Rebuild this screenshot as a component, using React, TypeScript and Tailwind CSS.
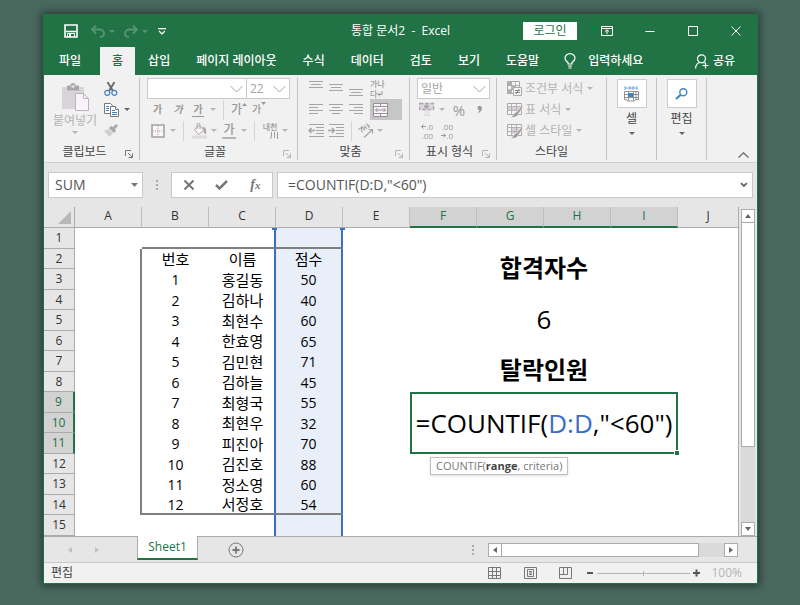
import type { ReactNode } from 'react'

const menuTabs = ['삽입', '페이지 레이아웃', '수식', '데이터', '검토', '보기', '도움말']

const students = [
  { name: '홍길동', score: 50 },
  { name: '김하나', score: 40 },
  { name: '최현수', score: 60 },
  { name: '한효영', score: 65 },
  { name: '김민현', score: 71 },
  { name: '김하늘', score: 45 },
  { name: '최형국', score: 55 },
  { name: '최현우', score: 32 },
  { name: '피진아', score: 70 },
  { name: '김진호', score: 88 },
  { name: '정소영', score: 60 },
  { name: '서정호', score: 54 },
]

const columns = ['A', 'B', 'C', 'D', 'E', 'F', 'G', 'H', 'I', 'J']
const rows = Array.from({ length: 15 }, (_, i) => i + 1)

function Caret({ className = 'text-[#b5b5b5]' }: { className?: string }) {
  return (
    <span className={`flex w-[10px] shrink-0 justify-center ${className}`}>
      <svg width="6" height="3" viewBox="0 0 6 3" fill="currentColor" aria-hidden="true">
        <path d="M0 0h6L3 3z" />
      </svg>
    </span>
  )
}

function Divider() {
  return <span className="mx-[5px] h-5 w-px shrink-0 bg-[#d4d4d4]" />
}

function Tool({
  label,
  className = 'w-5',
  children,
}: {
  label: string
  className?: string
  children: ReactNode
}) {
  return (
    <button
      type="button"
      aria-label={label}
      className={`flex h-[21px] shrink-0 items-center justify-center ${className}`}
    >
      {children}
    </button>
  )
}

function Group({
  label,
  launcher,
  className,
  children,
}: {
  label: string
  launcher?: string
  className: string
  children: ReactNode
}) {
  return (
    <section aria-label={label} className={`flex shrink-0 flex-col border-r border-[#c3c3c3] ${className}`}>
      <div className="h-[66px]">{children}</div>
      <div className="flex h-4 items-center">
        <span className="flex-1 text-center">{label}</span>
        {launcher && (
          <button type="button" aria-label={`${label} 설정`} className={`w-[14px] pt-1 ${launcher}`}>
            <svg width="8" height="8" viewBox="0 0 8 8" fill="none" stroke="currentColor" aria-hidden="true">
              <path d="M.5 6V.5H6M3 3l4 4M7.5 3.5v4h-4" />
            </svg>
          </button>
        )}
      </div>
    </section>
  )
}

function Combo({ value, label, className }: { value: string; label: string; className: string }) {
  return (
    <button
      type="button"
      aria-label={label}
      className={`flex h-[21px] items-center justify-between border border-[#c9c9c9] bg-white pr-[3px] pl-[3px] text-[#a5a5a5] ${className}`}
    >
      <span>{value}</span>
      <svg width="13" height="8" viewBox="0 0 13 8" fill="none" stroke="#a5a5a5" aria-hidden="true">
        <path d="M.5 1l6 6 6-6" />
      </svg>
    </button>
  )
}

function Lines({ lines }: { lines: [number, number, number][] }) {
  return (
    <svg width="14" height="15" viewBox="0 0 14 15" stroke="#a5a5a5" aria-hidden="true">
      {lines.map(([x1, x2, y]) => (
        <path key={y} d={`M${x1} ${y}H${x2}`} />
      ))}
    </svg>
  )
}

function Indent({ flip }: { flip?: boolean }) {
  return (
    <svg width="16" height="13" viewBox="0 0 16 13" fill="none" stroke="#a5a5a5" aria-hidden="true">
      <path d="M1 .5h15M8 3.5h8M8 6.5h8M8 9.5h8M1 12.5h15" />
      <path strokeWidth="1.5" d={flip ? 'M0 6.5h6M4 4l2.500 2.500L4 9' : 'M7 6.500H1M3.500 4L1 6.500 3.500 9'} />
    </svg>
  )
}

function DecimalArrow({ flip }: { flip?: boolean }) {
  return (
    <svg width="5" height="5" viewBox="0 0 5 5" fill="none" stroke="currentColor" aria-hidden="true">
      <path d={flip ? 'M0 2.500h4.500M2.500.5l2 2-2 2' : 'M5 2.500H.5M2.500.5l-2 2 2 2'} />
    </svg>
  )
}

function StyleIcon({ kind }: { kind: 'condition' | 'table' | 'cell' }) {
  return (
    <svg width="16" height="16" viewBox="0 0 16 16" fill="none" stroke="#a9a9a9" aria-hidden="true">
      {kind === 'condition' ? (
        <>
          <path d="M.5.5h12v12H.500z" fill="#f7f3f7" />
          <path d="M1 1h4v4H1zM5 5h4v4H5zM1 9h4v3H1z" fill="#b5afb5" stroke="none" />
          <path d="M.5 4.500h12M.5 8.500h6M4.500.5v12M8.500.5v6" strokeWidth=".8" />
          <path d="M6.500 6.500h8v8h-8z" fill="#f5f5f5" />
          <path d="M8 9.500h5M8 11.500h5M12 8l-3 5" stroke="#858585" />
        </>
      ) : (
        <>
          <path d="M.5 1.500h14v11H.500z" fill="#f7f3f7" />
          <path d={kind === 'cell' ? 'M4 4h8v7H4z' : 'M1 5h13v3H1z'} fill="#d8d0d8" stroke="none" />
          <path d="M.5 4.500h14M.5 8.500h10M4.500 1.500v11M9.500 1.500v7" strokeWidth=".8" />
          <path d="M15.500 3L9.500 10l-2 1c-1 1-1 3-4 4 4 .6 7 0 7.500-2.500L15.500 6z" fill="#9f9b9f" stroke="#f1f1f1" strokeWidth=".6" />
        </>
      )}
    </svg>
  )
}

function TitleBar() {
  return (
    <header className="grid h-8 grid-cols-[1fr_auto_1fr] items-center">
      <div className="flex items-center pl-5 text-white">
        <button type="button" aria-label="저장">
          <svg width="14" height="14" viewBox="0 0 14 14" fill="none" stroke="currentColor" strokeWidth="1.600" aria-hidden="true">
            <path d="M1 1h12v12H1zM2 7.500h10" />
            <path d="M3.500 13V9.500h7V13" strokeWidth="1" />
            <path d="M5 10h2v3H5z" fill="currentColor" stroke="none" />
          </svg>
        </button>
        <button type="button" aria-label="실행 취소" className="ml-[13px] text-[#579573]">
          <svg width="14" height="13" viewBox="0 0 14 13" fill="none" stroke="currentColor" strokeWidth="1.800" aria-hidden="true">
            <path d="M5 .5L1 4.500l4 4M1.500 4.500H8c3 0 5 1.800 5 4s-1.500 3.500-4 3.500" />
          </svg>
        </button>
        <Caret className="ml-[2px] text-[#579573]" />
        <button type="button" aria-label="다시 실행" className="ml-[7px] text-[#579573]">
          <svg width="14" height="13" viewBox="0 0 14 13" fill="none" stroke="currentColor" strokeWidth="1.800" aria-hidden="true">
            <path d="M9 .5l4 4-4 4M12.500 4.500H6c-3 0-5 1.800-5 4S2.500 12 5 12" />
          </svg>
        </button>
        <Caret className="ml-[2px] text-[#579573]" />
        <button type="button" aria-label="빠른 실행 도구 모음" className="ml-2">
          <svg width="8" height="7" viewBox="0 0 8 7" fill="none" stroke="currentColor" strokeWidth="1.200" aria-hidden="true">
            <path d="M0 .6h8M1 3l3 3 3-3" />
          </svg>
        </button>
      </div>
      <h1 className="whitespace-pre text-white">통합 문서2  -  Excel</h1>
      <div className="flex items-center justify-end text-white">
        <button type="button" className="mr-2 h-[18px] w-[54px] bg-white leading-[18px] text-[#217346]">
          로그인
        </button>
        <button type="button" aria-label="리본 메뉴 표시 옵션" className="flex w-[43px] justify-center">
          <svg width="12" height="10" viewBox="0 0 12 10" fill="none" stroke="currentColor" aria-hidden="true">
            <path d="M.5.5h11v9H.5zM.5 2.500h11M6 8V4M4 5.500L6 3.800l2 1.700" />
          </svg>
        </button>
        <button type="button" aria-label="최소화" className="flex w-[43px] justify-center">
          <svg width="10" height="10" viewBox="0 0 10 10" stroke="currentColor" aria-hidden="true">
            <path d="M.5 5.500h9" />
          </svg>
        </button>
        <button type="button" aria-label="최대화" className="flex w-[43px] justify-center">
          <svg width="10" height="10" viewBox="0 0 10 10" fill="none" stroke="currentColor" aria-hidden="true">
            <path d="M.5.5h9v9h-9z" />
          </svg>
        </button>
        <button type="button" aria-label="닫기" className="flex w-[43px] justify-center">
          <svg width="10" height="10" viewBox="0 0 10 10" stroke="currentColor" aria-hidden="true">
            <path d="M.5.5l9 9M9.500.5l-9 9" />
          </svg>
        </button>
      </div>
    </header>
  )
}

function MenuTabs() {
  return (
    <nav className="flex h-7 items-stretch font-medium text-white">
      <button type="button" className="px-[15px]">파일</button>
      <button type="button" className="ml-1 w-[35px] bg-[#f1f1f1] text-[#217346]">홈</button>
      {menuTabs.map((tab) => (
        <button key={tab} type="button" className="px-[13px] last-of-type:px-3">{tab}</button>
      ))}
      <button type="button" className="ml-3 flex items-center gap-3">
        <svg width="12" height="16" viewBox="0 0 12 16" fill="none" stroke="currentColor" strokeWidth="1.200" aria-hidden="true">
          <path d="M4 11V9.500C2.500 8.500 1 7.300 1 5.300a5 4.700 0 0 1 10 0c0 2-1.500 3.200-3 4.200V11zM4 13h4M4.500 15h3" />
        </svg>
        입력하세요
      </button>
      <button type="button" className="mr-[22px] ml-auto flex items-center gap-1">
        <svg width="14" height="15" viewBox="0 0 14 15" fill="none" stroke="currentColor" strokeWidth="1.200" aria-hidden="true">
          <circle cx="6.500" cy="4.800" r="4" />
          <path d="M.6 14.500C.6 11.500 2 9.500 4.500 8.500M8.500 8.500l1 .7M10.500 8.500v6M7.500 11.500h6" />
        </svg>
        공유
      </button>
    </nav>
  )
}

function Ribbon() {
  return (
    <div className="flex border-b border-[#d0d0d0] bg-[#f1f1f1] pt-[3px] pb-[2px] text-[#444]">
      <Group label="클립보드" launcher="text-[#777]" className="w-24">
        <div className="flex pl-2">
          <button type="button" className="flex w-[46px] flex-col items-center pt-[5px] text-[#b5b0b5]">
            <svg width="28" height="28" viewBox="0 0 28 28" fill="none" aria-hidden="true">
              <path d="M1 4h22v22H1z" fill="#d9d4d9" />
              <path d="M6 2.500h3.500a2.500 2.500 0 0 1 5 0H18v5H6z" fill="#aaa6aa" />
              <path d="M10.500 2.500h3v2h-3z" fill="#f1f1f1" />
              <path d="M14.500 10.500h8l5 5v12h-13zM22.500 10.500v5h5" fill="#f9f4f9" stroke="#bcb4bc" />
            </svg>
            <span className="leading-5">붙여넣기</span>
            <Caret />
          </button>
          <div className="ml-1 flex flex-col">
            <Tool label="잘라내기" className="w-[18px]">
              <svg width="14" height="14" viewBox="0 0 14 14" fill="none" aria-hidden="true">
                <path d="M3.500 0l5.500 9M10.500 0L5 9" stroke="#666" strokeWidth="1.800" />
                <circle cx="3.300" cy="10.800" r="2.500" stroke="#3f83c4" strokeWidth="1.200" />
                <circle cx="10.300" cy="10.800" r="2.500" stroke="#3f83c4" strokeWidth="1.200" />
              </svg>
            </Tool>
            <div className="flex items-center">
              <Tool label="복사" className="w-[18px]">
                <svg width="15" height="14" viewBox="0 0 15 14" fill="#fff" stroke="#777" aria-hidden="true">
                  <path d="M.5.5h6l2 2v8h-8z" />
                  <path d="M6.500 3.500h5l3 3v7h-8z" />
                  <path d="M11.500 3.500v3h3" />
                  <path d="M2 3.500h3M2 5.500h3M2 7.500h3M8 7.500h3M8 9.500h5M8 11.500h5" stroke="#3f83c4" />
                </svg>
              </Tool>
              <Caret className="ml-[2px] text-[#666]" />
            </div>
            <Tool label="서식 복사" className="w-[18px]">
              <svg width="14" height="13" viewBox="0 0 14 13" aria-hidden="true">
                <path d="M12 0l2 2-3 3 1 2-2 2-5-5 2-2 2 1z" fill="#aaa6aa" />
                <path d="M5 5l4 4-3.500 4L0 7z" fill="#d3ced3" />
              </svg>
            </Tool>
          </div>
        </div>
      </Group>

      <Group label="글꼴" launcher="text-[#b5b5b5]" className="w-[158px] pl-[7px]">
        <div className="flex">
          <Combo label="글꼴 이름" value="" className="w-[100px]" />
          <Combo label="글꼴 크기" value="22" className="-ml-px w-11" />
        </div>
        <div className="flex items-center text-[10px] text-[#999]">
          <Tool label="굵게" className="w-[21px] font-bold">가</Tool>
          <Tool label="기울임꼴" className="w-5 font-bold italic">가</Tool>
          <Tool label="밑줄"><span className="border-b border-[#999] px-px leading-[13px] font-bold">가</span></Tool>
          <Caret />
          <Divider />
          <Tool label="글꼴 크기 크게" className="w-5 text-xs font-medium">
            가
            <svg width="5" height="14" viewBox="0 0 5 14" fill="currentColor" aria-hidden="true"><path d="M0 3h5L2.500 0z" /></svg>
          </Tool>
          <Tool label="글꼴 크기 작게" className="w-5 font-medium">
            가
            <svg width="5" height="16" viewBox="0 0 5 16" fill="currentColor" aria-hidden="true"><path d="M0 0h5L2.500 3z" /></svg>
          </Tool>
        </div>
        <div className="flex items-center text-[#999]">
          <Tool label="테두리" className="w-[21px]">
            <svg width="14" height="14" viewBox="0 0 14 14" fill="#faf6fa" stroke="#a5a0a5" aria-hidden="true">
              <path d="M1 1h12v12H1z" strokeWidth="1.600" />
              <path d="M7 2v10M2 7h10" strokeDasharray="1 1" />
            </svg>
          </Tool>
          <Caret />
          <Divider />
          <Tool label="채우기 색">
            <svg width="15" height="16" viewBox="0 0 15 16" fill="none" stroke="#a9a5a9" aria-hidden="true">
              <path d="M2.500 6.500l5-4 4.500 5-5.500 4z" fill="#faf6fa" />
              <path d="M5 6V2a1.500 1.500 0 0 1 3 0v4" />
              <path d="M11 4c3 1 3 4 2.500 7-1-1-1.500-3-1.500-4z" fill="#a9a5a9" />
              <path d="M0 12.500h15v3H0z" fill="#e0dbe0" stroke="none" />
            </svg>
          </Tool>
          <Caret />
          <Tool label="글꼴 색"><span className="border-b-2 border-[#b5b5b5] px-px leading-[15px] font-medium">가</span></Tool>
          <Caret />
          <Divider />
          <Tool label="윗주 필드" className="w-5 flex-col text-[8px] leading-[10px] font-medium">
            <span>내천</span>
            <svg width="8" height="7" viewBox="0 0 8 7" fill="none" stroke="currentColor" className="ml-2" aria-hidden="true">
              <path d="M1.500 0v4L.5 7M4.500 0v6M7.500 0v7" />
            </svg>
          </Tool>
          <Caret />
        </div>
      </Group>

      <Group label="맞춤" launcher="text-[#b5b5b5]" className="w-28 pl-2">
        <div className="flex items-center text-[8px] leading-[10px] font-medium text-[#999]">
          <Tool label="위쪽 맞춤"><Lines lines={[[0, 14, 0.5], [2, 12, 3.5], [0, 14, 6.5]]} /></Tool>
          <Tool label="가운데 맞춤"><Lines lines={[[0, 14, 3.5], [2, 12, 6.5], [0, 14, 9.5]]} /></Tool>
          <Tool label="아래쪽 맞춤"><Lines lines={[[0, 14, 8.5], [2, 12, 11.5], [0, 14, 14.5]]} /></Tool>
          <Tool label="텍스트 줄 바꿈" className="ml-1 w-5 flex-col items-start">
            <span>가나</span>
            <span className="flex items-center">
              다
              <svg width="6" height="7" viewBox="0 0 6 7" fill="none" stroke="currentColor" aria-hidden="true"><path d="M5 1v3.500H1M3 2.500l-2 2 2 2" /></svg>
            </span>
          </Tool>
        </div>
        <div className="flex items-center">
          <Tool label="왼쪽 맞춤"><Lines lines={[[0, 14, 2.5], [0, 9, 5.5], [0, 14, 8.5], [0, 9, 11.5]]} /></Tool>
          <Tool label="수평 가운데 맞춤"><Lines lines={[[0, 14, 2.5], [3, 11, 5.5], [0, 14, 8.5], [3, 11, 11.5]]} /></Tool>
          <Tool label="오른쪽 맞춤"><Lines lines={[[0, 14, 2.5], [5, 14, 5.5], [0, 14, 8.5], [5, 14, 11.5]]} /></Tool>
          <Tool label="병합하고 가운데 맞춤" className="ml-1 w-8 bg-[#c6c6c6] pr-3">
            <svg width="15" height="14" viewBox="0 0 15 14" fill="#faf3fa" stroke="#989098" aria-hidden="true">
              <path d="M.5.5h14v13H.5zM.5 3.500h14M.5 10.500h14M7.500.5v3M7.500 10.500v3" />
              <path d="M2.500 7h10M4.500 5l-2 2 2 2M10.500 5l2 2-2 2" fill="none" />
            </svg>
          </Tool>
        </div>
        <div className="flex items-center">
          <Tool label="내어쓰기"><Indent /></Tool>
          <Tool label="들여쓰기"><Indent flip /></Tool>
          <Divider />
          <Tool label="방향" className="w-[18px]">
            <svg width="16" height="15" viewBox="0 0 16 15" fill="none" stroke="#a5a5a5" aria-hidden="true">
              <path d="M.5 6.500l3-2 .5 5M3.500 3l3.500 4.500M5.500 5.500L7 4.500M6.500 2.500L9 6M8.500.5l3 4.500M10 3l1.500-1" strokeWidth="1.200" />
              <path d="M6 14.500l8.500-8M10.500 6.500h4v4" strokeWidth="1.200" />
            </svg>
          </Tool>
          <Caret />
        </div>
      </Group>

      <Group label="표시 형식" launcher="text-[#b5b5b5]" className="w-[87px] pl-[7px]">
        <Combo label="숫자 형식" value="일반" className="w-[73px]" />
        <div className="flex items-center text-[#999]">
          <Tool label="회계 표시 형식">
            <svg width="16" height="15" viewBox="0 0 16 15" fill="none" stroke="#aaa6aa" aria-hidden="true">
              <path d="M.5 1.500h14v6H.5z" fill="#ded9de" strokeWidth="1.400" strokeDasharray="4 1.500" />
              <path d="M7.500 2.500l2.500 2-2.500 2-2.500-2z" fill="#aaa6aa" />
              <path d="M5 8h6v6H5z" fill="#ded9de" stroke="none" />
              <path d="M5 10h6M5 12h6" stroke="#f4f0f4" />
            </svg>
          </Tool>
          <Caret />
          <Tool label="백분율 스타일" className="w-6 text-[15px]">%</Tool>
          <Tool label="쉼표 스타일" className="w-4">
            <svg width="5" height="7" viewBox="0 0 5 7" fill="currentColor" aria-hidden="true"><path d="M1 0h3l1 2c0 2-1.500 4-3.500 5L1 6.500 2.500 4 .5 3z" /></svg>
          </Tool>
        </div>
        <div className="flex items-center text-[8px] leading-[9px] font-medium text-[#999]">
          <Tool label="자릿수 늘림" className="w-5 flex-col items-end pr-1">
            <span className="flex items-center"><DecimalArrow />.0</span>
            <span>.00</span>
          </Tool>
          <Tool label="자릿수 줄임" className="w-5 flex-col items-end pr-1">
            <span>.00</span>
            <span className="flex items-center"><DecimalArrow flip />.0</span>
          </Tool>
        </div>
      </Group>

      <Group label="스타일" className="w-[110px]">
        <div className="flex flex-col items-start pl-[10px] text-[#b3b3b3]">
          <button type="button" className="flex h-[21px] items-center gap-[2px]"><StyleIcon kind="condition" />조건부 서식<Caret /></button>
          <button type="button" className="flex h-[21px] items-center gap-[2px]"><StyleIcon kind="table" />표 서식<Caret /></button>
          <button type="button" className="flex h-[21px] items-center gap-[2px]"><StyleIcon kind="cell" />셀 스타일<Caret /></button>
        </div>
      </Group>

      <button type="button" className="flex w-[50px] shrink-0 flex-col items-center border-r border-[#c3c3c3] pt-px">
        <span className="flex h-[29px] w-[30px] items-center justify-center border border-[#cdcdcd] bg-white">
          <svg width="15" height="16" viewBox="0 0 15 16" fill="none" stroke="#777" aria-hidden="true">
            <path d="M1 0v4M13 0v4M1 2h12M6 0v4M9 0v4" stroke="#5b93c8" strokeWidth=".8" />
            <path d="M.5 5.500h14v8h-3l-1 1.500h-7l-1-1.500h-2zM.5 8.500h14M.5 11.500h14M4.500 5.500v9M9.500 5.500v9M12 5.500v8" strokeWidth=".8" />
            <path d="M4 7h5v4H4z" fill="#3f83c4" stroke="none" />
          </svg>
        </span>
        <span className="mt-[2px] leading-[18px]">셀</span>
        <span className="mt-1"><Caret className="text-[#666]" /></span>
      </button>
      <button type="button" className="flex w-[50px] shrink-0 flex-col items-center border-r border-[#c3c3c3] pt-px">
        <span className="flex h-[29px] w-[30px] items-center justify-center border border-[#cdcdcd] bg-white">
          <svg width="13" height="12" viewBox="0 0 13 12" fill="none" stroke="#3f83c4" aria-hidden="true">
            <circle cx="8.300" cy="4.300" r="3.500" strokeWidth="1.400" />
            <path d="M5.500 7L1 11" strokeWidth="2.200" />
          </svg>
        </span>
        <span className="mt-[2px] leading-[18px]">편집</span>
        <span className="mt-1"><Caret className="text-[#666]" /></span>
      </button>
      <button type="button" aria-label="리본 메뉴 축소" className="mr-2 mb-[2px] ml-auto self-end">
        <svg width="11" height="6" viewBox="0 0 11 6" fill="none" stroke="#666" strokeWidth="1.200" aria-hidden="true">
          <path d="M.5 5.500l5-4.700 5 4.700" />
        </svg>
      </button>
    </div>
  )
}

function FormulaBar() {
  return (
    <div className="flex h-11 items-center pr-1 pl-1 text-sm text-[#555]">
      <div className="flex h-[26px] w-[95px] items-center border border-[#c9c9c9] bg-white pr-1">
        <input aria-label="이름 상자" defaultValue="SUM" className="w-full min-w-0 bg-transparent pl-[6px] outline-none" />
        <svg width="7" height="4" viewBox="0 0 7 4" fill="#777" className="shrink-0" aria-hidden="true"><path d="M0 0h7L3.500 4z" /></svg>
      </div>
      <svg width="3" height="11" viewBox="0 0 3 11" fill="#aaa" className="mr-3 ml-[13px]" aria-hidden="true">
        <path d="M0 0h2v2H0zM0 4h2v2H0zM0 8h2v2H0z" />
      </svg>
      <div className="flex h-[26px] w-[102px] items-center border border-[#c9c9c9] bg-white">
        <button type="button" aria-label="취소" className="flex flex-1 justify-center">
          <svg width="10" height="10" viewBox="0 0 10 10" stroke="#777" strokeWidth="2" aria-hidden="true"><path d="M.5.5l9 9M9.500.5l-9 9" /></svg>
        </button>
        <button type="button" aria-label="입력" className="flex flex-1 justify-center">
          <svg width="13" height="10" viewBox="0 0 13 10" fill="none" stroke="#777" strokeWidth="2.500" aria-hidden="true"><path d="M1 5l3.500 3.500L12 1" /></svg>
        </button>
        <button type="button" aria-label="함수 삽입" className="flex-1 font-['Liberation_Serif'] font-bold text-[#777] italic">
          f<span className="text-[11px]">x</span>
        </button>
      </div>
      <div className="ml-1 flex h-[26px] flex-1 items-center border border-[#c9c9c9] bg-white pr-1">
        <input
          aria-label="수식 입력줄"
          defaultValue={'=COUNTIF(D:D,"<60")'}
          className="w-full min-w-0 bg-transparent pl-[10px] outline-none"
        />
        <svg width="8" height="6" viewBox="0 0 8 6" fill="none" stroke="#666" strokeWidth="1.800" aria-hidden="true"><path d="M1 1l3 3 3-3" /></svg>
      </div>
    </div>
  )
}

function rowCells(row: number) {
  const inBox = row >= 2 && row <= 14
  const edge = row === 1 || row === 14 ? 'border-b-2 border-b-[#808080]' : ''
  const student = students[row - 3]
  return (
    <>
      <td className={inBox ? 'border-r-2 border-r-[#808080]' : ''} />
      <td className={edge}>{row === 2 ? '번호' : student && <span className="text-sm leading-4">{row - 2}</span>}</td>
      <td className={`border-r-2 border-r-[#3b6ec6] pl-[2px] ${edge}`}>{row === 2 ? '이름' : student?.name}</td>
      <td className={`relative border-r-2 border-r-[#3b6ec6] bg-[#e9eff9] ${edge}`}>
        {row === 2 ? '점수' : student && <span className="text-sm leading-4">{student.score}</span>}
        {row === 1 && (
          <>
            <span className="absolute top-0 -left-1 h-[2px] w-[5px] bg-[#3b6ec6]" />
            <span className="absolute top-0 -right-1 h-[2px] w-[5px] bg-[#3b6ec6]" />
          </>
        )}
      </td>
      <td />
      {row === 2 && <td colSpan={4} rowSpan={2} className="pb-[3px] text-2xl leading-6 font-bold">합격자수</td>}
      {row === 4 && <td colSpan={4} rowSpan={3} className="pb-[3px] text-[26px]">6</td>}
      {row === 7 && <td colSpan={4} rowSpan={2} className="pb-[3px] text-2xl leading-6 font-bold">탈락인원</td>}
      {row === 9 && (
        <td colSpan={4} rowSpan={3} className="relative border-2 border-[#217346] text-[26px] leading-8 whitespace-nowrap">
          =COUNTIF(<span className="text-[#3b6ec6]">D:D</span>,"&lt;60")
          <span className="absolute -right-[3px] -bottom-[3px] size-[5px] border-t border-l border-white bg-[#217346]" />
          <span className="absolute top-[63px] left-[18px] h-[18px] border border-[#c0c0c0] bg-white px-[5px] text-[11px] leading-[15px] text-[#777] shadow-sm">
            COUNTIF(<b className="text-[#444]">range</b>, criteria)
          </span>
        </td>
      )}
      {(row === 1 || row > 11) && <td colSpan={4} />}
      <td />
    </>
  )
}

function Sheet() {
  return (
    <div className="flex">
      <div className="min-w-0 flex-1 border-r border-[#ababab]">
        <table className="w-full table-fixed border-separate border-spacing-0 text-center text-[15px] leading-4 text-black">
          <colgroup>
            <col className="w-[31px]" />
            {columns.map((c) => <col key={c} className={c === 'J' ? '' : 'w-[67px]'} />)}
          </colgroup>
          <thead>
            <tr className="h-[21px] text-xs leading-4 text-[#333]">
              <th className="border-r border-b border-[#ababab] bg-[#e6e6e6] pr-[3px] pb-[3px] align-bottom">
                <svg width="13" height="13" viewBox="0 0 13 13" fill="#b8b8b8" className="ml-auto" aria-label="모두 선택"><path d="M13 0v13H0z" /></svg>
              </th>
              {columns.map((c) => (
                <th
                  key={c}
                  scope="col"
                  className={
                    c >= 'F' && c <= 'I'
                      ? 'border-r border-b-2 border-r-[#bdbdbd] border-b-[#217346] bg-[#d2d2d2] pb-[2px] font-normal text-[#217346]'
                      : 'border-r border-b border-r-[#bdbdbd] border-b-[#ababab] bg-[#e6e6e6] pb-[3px] font-normal last:border-r-0'
                  }
                >
                  {c}
                </th>
              ))}
            </tr>
          </thead>
          <tbody className="bg-white">
            {rows.map((row) => (
              <tr key={row} className="h-5 odd:h-[21px]">
                <th
                  scope="row"
                  className={
                    row >= 9 && row <= 11
                      ? 'border-r-2 border-b border-r-[#217346] border-b-[#ababab] bg-[#d2d2d2] text-xs font-normal text-[#217346]'
                      : 'border-r border-b border-[#ababab] bg-[#e6e6e6] text-xs font-normal text-[#333]'
                  }
                >
                  {row}
                </th>
                {rowCells(row)}
              </tr>
            ))}
          </tbody>
        </table>
      </div>
      <div className="mr-[2px] ml-[2px] flex w-[14px] flex-col pt-[2px]">
        <button type="button" aria-label="위로 스크롤" className="flex h-[14px] items-center justify-center border border-[#ababab] bg-white">
          <svg width="6" height="4" viewBox="0 0 6 4" fill="#666" aria-hidden="true"><path d="M0 4h6L3 0z" /></svg>
        </button>
        <div className="flex-1 bg-[#dadada]">
          <div className="h-3/4 border border-t-0 border-[#ababab] bg-white" />
        </div>
        <button type="button" aria-label="아래로 스크롤" className="flex h-[14px] items-center justify-center border border-[#ababab] bg-white">
          <svg width="6" height="4" viewBox="0 0 6 4" fill="#666" aria-hidden="true"><path d="M0 0h6L3 4z" /></svg>
        </button>
      </div>
    </div>
  )
}

function SheetTabs() {
  return (
    <div className="flex h-[26px] items-center border-t border-[#ababab] pr-[19px]">
      <button type="button" aria-label="이전 시트" className="ml-6">
        <svg width="5" height="6" viewBox="0 0 5 6" fill="#c0c0c0" aria-hidden="true"><path d="M4 0v6L0 3z" /></svg>
      </button>
      <button type="button" aria-label="다음 시트" className="ml-[22px]">
        <svg width="5" height="6" viewBox="0 0 5 6" fill="#c0c0c0" aria-hidden="true"><path d="M0 0v6l4-3z" /></svg>
      </button>
      <button type="button" className="-mt-px ml-[37px] h-6 w-[61px] self-start border-x border-b-2 border-x-[#ababab] border-b-[#217346] bg-white text-[#217346]">
        Sheet1
      </button>
      <button type="button" aria-label="새 시트" className="ml-[30px]">
        <svg width="16" height="16" viewBox="0 0 16 16" fill="none" stroke="#777" aria-hidden="true">
          <circle cx="8" cy="8" r="7" />
          <path d="M8 4.500v7M4.500 8h7" strokeWidth="1.800" />
        </svg>
      </button>
      <svg width="2" height="10" viewBox="0 0 2 10" fill="#aaa" className="mr-[14px] ml-auto" aria-hidden="true">
        <path d="M0 0h2v2H0zM0 4h2v2H0zM0 8h2v2H0z" />
      </svg>
      <div className="flex h-[14px] w-[250px]">
        <button type="button" aria-label="왼쪽으로 스크롤" className="flex w-[14px] items-center justify-center border border-[#ababab] bg-white">
          <svg width="4" height="6" viewBox="0 0 4 6" fill="#666" aria-hidden="true"><path d="M4 0v6L0 3z" /></svg>
        </button>
        <div className="flex-1 bg-[#dadada]">
          <div className="h-full w-[197px] border border-l-0 border-[#ababab] bg-white" />
        </div>
        <button type="button" aria-label="오른쪽으로 스크롤" className="flex w-[14px] items-center justify-center border border-[#ababab] bg-white">
          <svg width="4" height="6" viewBox="0 0 4 6" fill="#666" aria-hidden="true"><path d="M0 0v6l4-3z" /></svg>
        </button>
      </div>
    </div>
  )
}

function StatusBar() {
  return (
    <footer className="flex h-[21px] items-center border-t border-[#c9c9c9] bg-[#f1f1f1] pr-[15px] pl-[7px] text-[#444]">
      <span className="mr-auto">편집</span>
      <button type="button" aria-label="기본 보기">
        <svg width="13" height="12" viewBox="0 0 13 12" fill="none" stroke="#777" aria-hidden="true">
          <path d="M.5.5h12v11H.5zM.5 4.500h12M.5 8.500h12M4.500.5v11M8.500.5v11" />
        </svg>
      </button>
      <button type="button" aria-label="페이지 레이아웃" className="ml-[23px]">
        <svg width="13" height="12" viewBox="0 0 13 12" fill="none" stroke="#777" aria-hidden="true">
          <path d="M.5.5h12v11H.5zM3.500 2.500h6v7h-6zM5 4.500h3M5 6h3M5 7.500h3" />
        </svg>
      </button>
      <button type="button" aria-label="페이지 나누기 미리 보기" className="ml-[22px]">
        <svg width="13" height="12" viewBox="0 0 13 12" fill="none" stroke="#777" aria-hidden="true">
          <path d="M.5.5h12v11H.5zM.5 7.500h8v-7M4.500.5v7" />
        </svg>
      </button>
      <button type="button" aria-label="축소" className="ml-[15px]">
        <svg width="7" height="8" viewBox="0 0 7 8" stroke="#555" strokeWidth="2" aria-hidden="true"><path d="M0 4h6" /></svg>
      </button>
      <svg width="93" height="7" viewBox="0 0 93 7" stroke="#b5b5b5" className="mx-[3px]" aria-hidden="true">
        <path d="M0 3.500h93M46.500 1v5" />
      </svg>
      <button type="button" aria-label="확대">
        <svg width="7" height="8" viewBox="0 0 7 8" stroke="#555" strokeWidth="2" aria-hidden="true"><path d="M0 4h7M3.500 .5v7" /></svg>
      </button>
      <span className="ml-[11px] text-[#b5b5b5]">100%</span>
    </footer>
  )
}

export default function App() {
  return (
    <main className="min-h-screen bg-[#49695f] pt-[14px] pr-[42px] pb-5 pl-[43px] font-['Open_Sans','Noto_Sans_CJK_KR',sans-serif] text-xs">
      <div className="border border-[#217346] bg-[#e6e6e6] shadow-[0_0_8px_2px_rgba(0,0,0,0.45)]">
        <div className="bg-[#217346]">
          <TitleBar />
          <MenuTabs />
        </div>
        <Ribbon />
        <FormulaBar />
        <Sheet />
        <SheetTabs />
        <StatusBar />
      </div>
    </main>
  )
}
